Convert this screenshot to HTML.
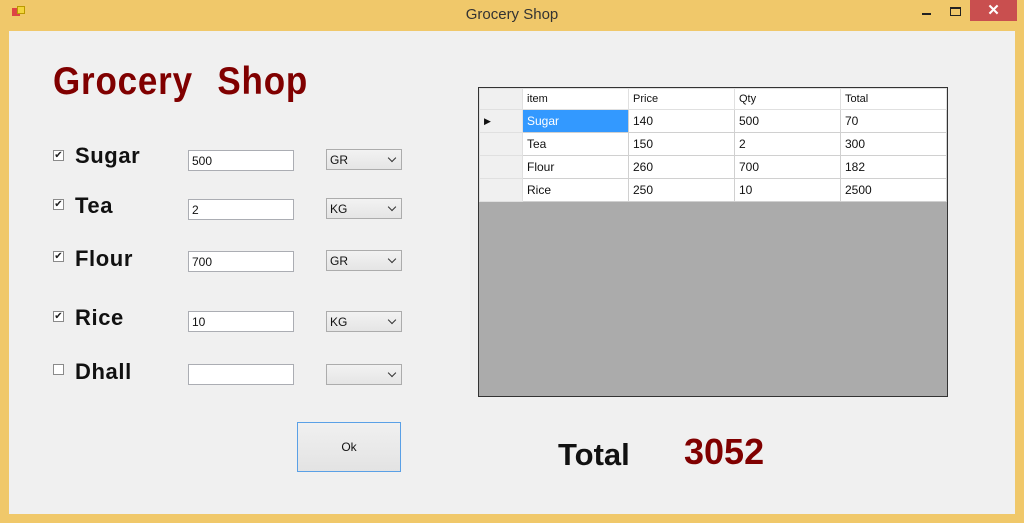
<!DOCTYPE html>
<html><head><meta charset="utf-8"><style>
*{margin:0;padding:0;box-sizing:border-box}
body{width:1024px;height:523px;background:#f0c86a;font-family:"Liberation Sans",sans-serif;position:relative;overflow:hidden}
.a{position:absolute}
.client{left:9px;top:31px;width:1006px;height:483px;background:#f0f0f0}
.title{left:0;top:6px;width:1024px;text-align:center;font-size:15px;color:#333}
.cb{width:11px;height:11px;border:1px solid #8a8a8a;background:#fff;font-size:10px;line-height:9px;text-align:center;color:#222}
.lbl{font-size:22px;font-weight:bold;color:#111;letter-spacing:0.6px}
.tb{width:106px;height:21px;border:1px solid #abadb3;background:#fff;font-size:12px;padding:3px 0 0 3px;color:#111}
.cmb{width:76px;height:21px;border:1px solid #acacac;background:linear-gradient(#f2f2f2,#e5e5e5);font-size:12px;padding:3px 0 0 3px;color:#111}
.cmb:after{content:"";position:absolute;right:6px;top:5px;width:5px;height:5px;border-right:1.5px solid #333;border-bottom:1.5px solid #333;transform:rotate(45deg)}
.grid{left:478px;top:87px;width:470px;height:310px;background:#ababab;border:1px solid #333}
table{border-collapse:collapse;font-size:12px;position:absolute;left:0;top:0}
td{border:1px solid #d0d0d0;height:23px;padding-left:4px;background:#fff;color:#111}
tr.h td{height:21px;border-color:#e0e0e0;font-size:11px}
td.rh{width:43px;background:#f0f0f0;border-color:#e0e0e0}
</style></head><body>
<div class="a" style="left:12px;top:8px;width:8px;height:8px;background:#d44;"></div>
<div class="a" style="left:17px;top:6px;width:8px;height:8px;background:#f2d43c;border:1px solid #b90"></div>
<div class="a title">Grocery Shop</div>
<div class="a" style="left:922px;top:13px;width:9px;height:2px;background:#222"></div>
<div class="a" style="left:950px;top:7px;width:11px;height:9px;border:1px solid #222;border-top-width:2px"></div>
<div class="a" style="left:970px;top:0;width:47px;height:21px;background:#c94f4f;color:#fff;text-align:center;font-size:15px;line-height:21px;font-weight:bold">✕</div>
<div class="a client"></div>
<div class="a" style="left:53px;top:60px;font-size:35px;font-weight:bold;color:#800000;word-spacing:14px;letter-spacing:0.8px;transform:scaleY(1.1);transform-origin:left top">Grocery Shop</div>

<div class="a cb" style="left:53px;top:150px">✔</div><div class="a lbl" style="left:75px;top:143px">Sugar</div>
<div class="a tb" style="left:188px;top:150px">500</div><div class="a cmb" style="left:326px;top:149px">GR</div>
<div class="a cb" style="left:53px;top:199px">✔</div><div class="a lbl" style="left:75px;top:193px">Tea</div>
<div class="a tb" style="left:188px;top:199px">2</div><div class="a cmb" style="left:326px;top:198px">KG</div>
<div class="a cb" style="left:53px;top:251px">✔</div><div class="a lbl" style="left:75px;top:246px">Flour</div>
<div class="a tb" style="left:188px;top:251px">700</div><div class="a cmb" style="left:326px;top:250px">GR</div>
<div class="a cb" style="left:53px;top:311px">✔</div><div class="a lbl" style="left:75px;top:305px">Rice</div>
<div class="a tb" style="left:188px;top:311px">10</div><div class="a cmb" style="left:326px;top:311px">KG</div>
<div class="a cb" style="left:53px;top:364px"></div><div class="a lbl" style="left:75px;top:359px">Dhall</div>
<div class="a tb" style="left:188px;top:364px"></div><div class="a cmb" style="left:326px;top:364px"></div>

<div class="a" style="left:297px;top:422px;width:104px;height:50px;border:1px solid #5aa0e6;background:linear-gradient(#f0f0f0,#e3e3e3);text-align:center;line-height:48px;font-size:12px;color:#111">Ok</div>
<div class="a" style="left:558px;top:437px;font-size:31px;font-weight:bold;color:#111">Total</div>
<div class="a" style="left:684px;top:431px;font-size:36px;font-weight:bold;color:#800000">3052</div>

<div class="a grid"><table>
<tr class="h"><td class="rh"></td><td style="width:106px">item</td><td style="width:106px">Price</td><td style="width:106px">Qty</td><td style="width:106px">Total</td></tr>
<tr><td class="rh" style="font-size:9px">▶</td><td style="background:#3399ff;color:#fff">Sugar</td><td>140</td><td>500</td><td>70</td></tr>
<tr><td class="rh"></td><td>Tea</td><td>150</td><td>2</td><td>300</td></tr>
<tr><td class="rh"></td><td>Flour</td><td>260</td><td>700</td><td>182</td></tr>
<tr><td class="rh"></td><td>Rice</td><td>250</td><td>10</td><td>2500</td></tr>
</table></div>
</body></html>
